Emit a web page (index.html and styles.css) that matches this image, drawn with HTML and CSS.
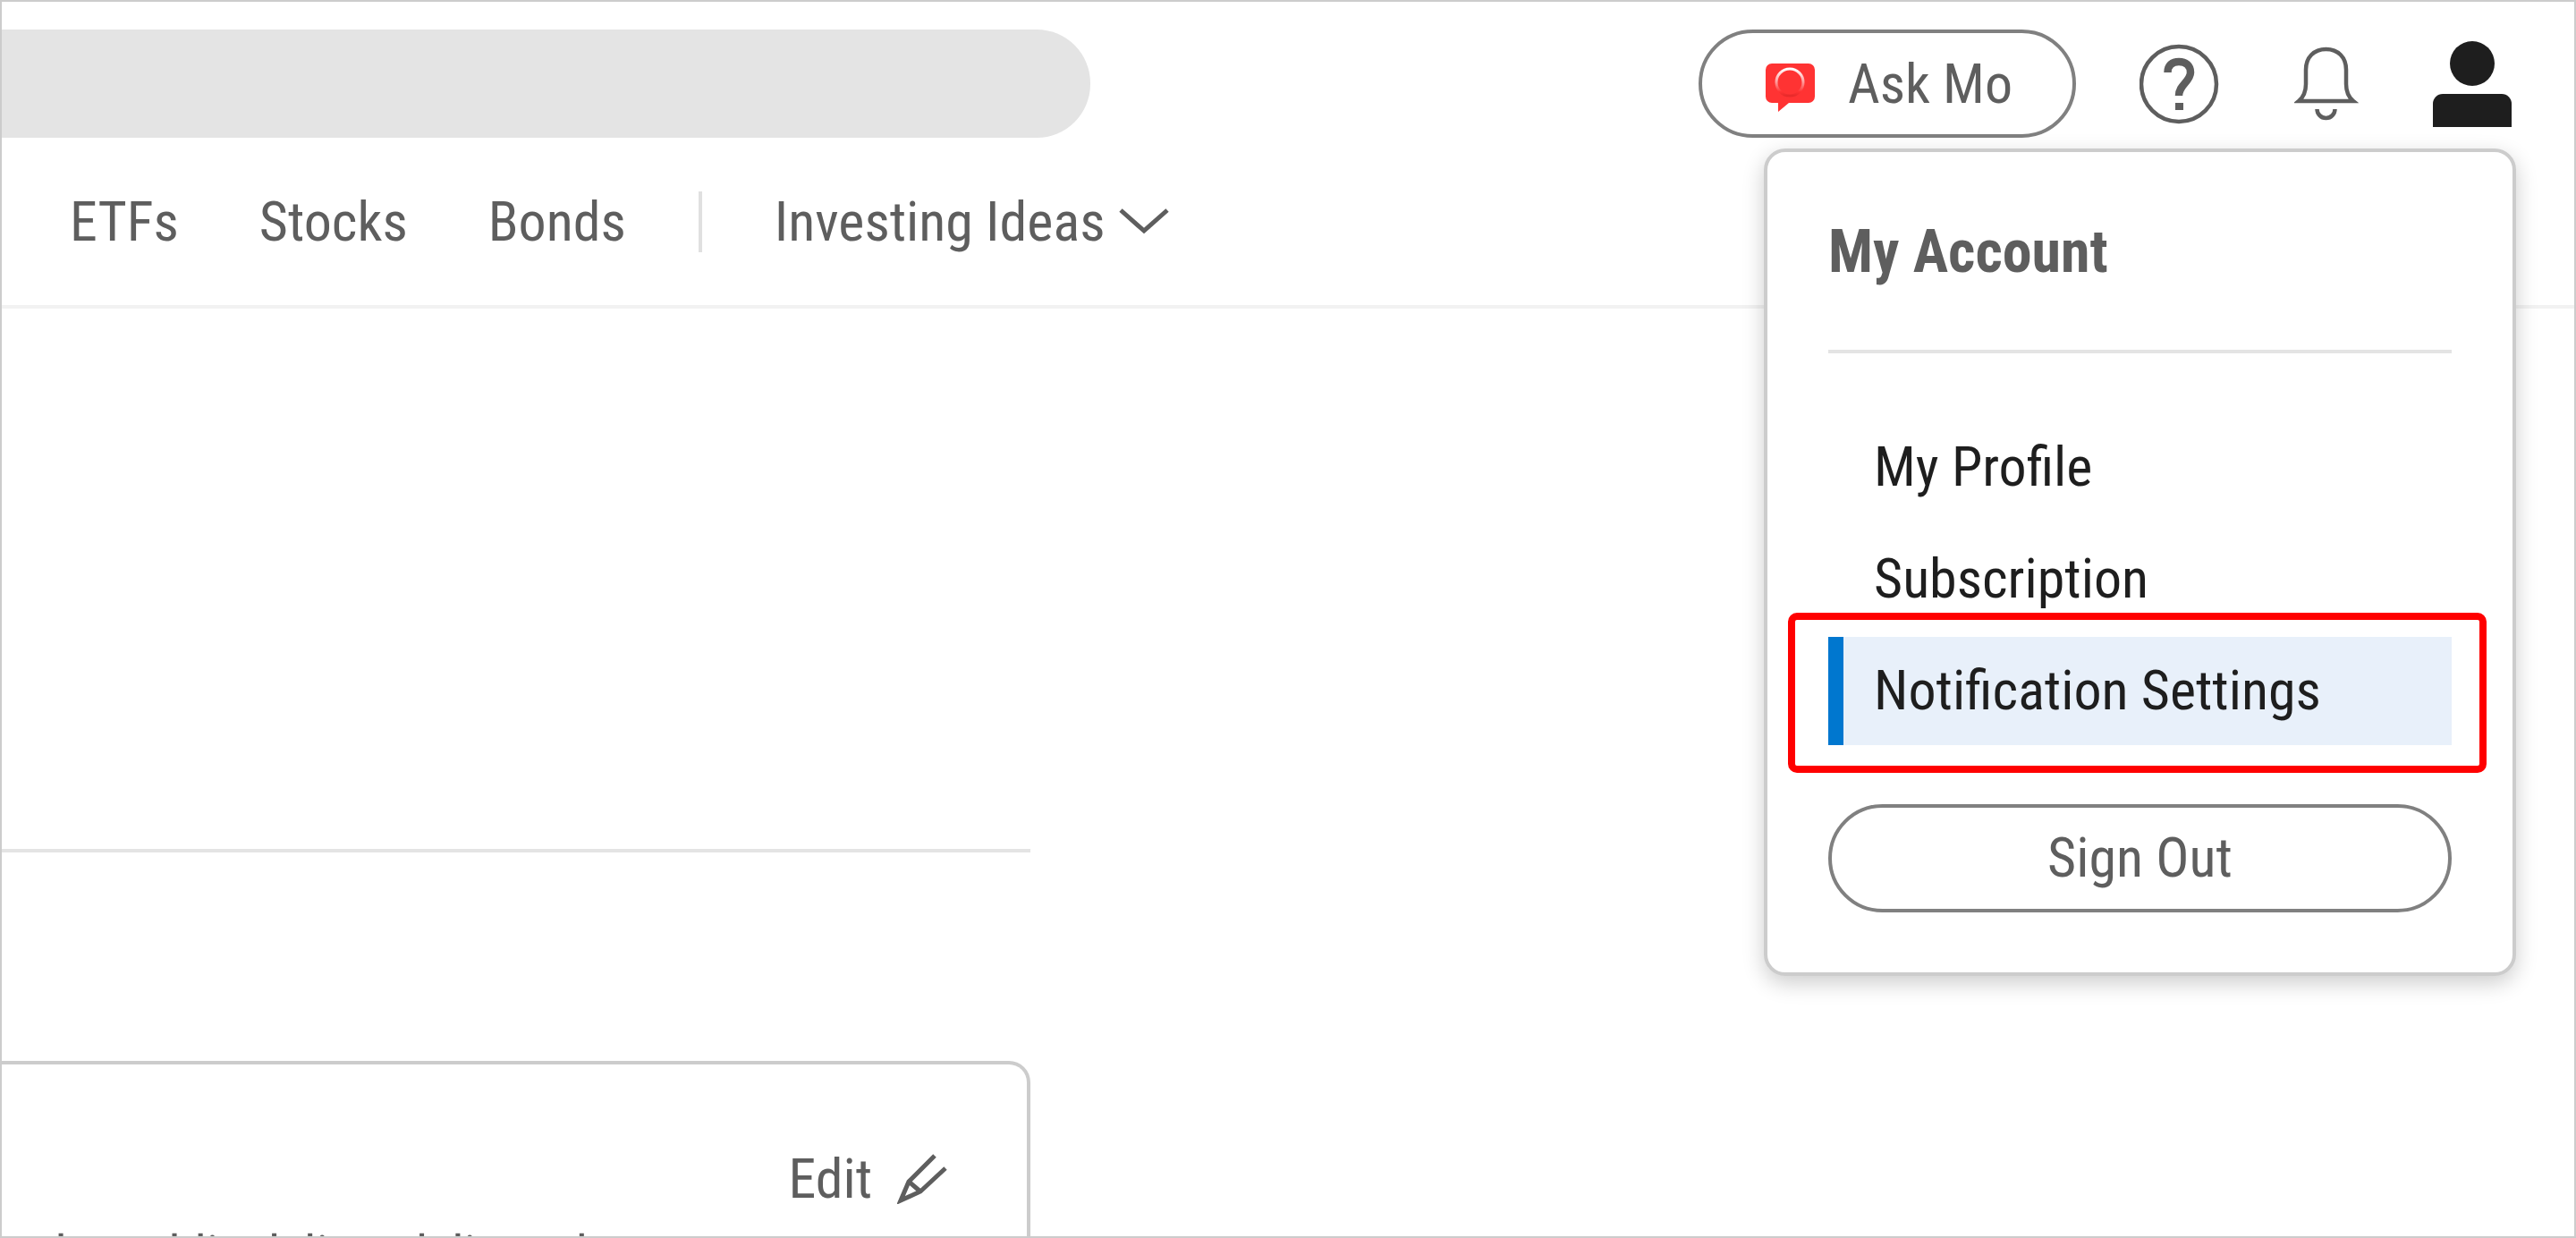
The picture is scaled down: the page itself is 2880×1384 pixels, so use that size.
FILE: index.html
```
<!DOCTYPE html>
<html lang="en">
<head>
<meta charset="utf-8">
<meta name="viewport" content="width=device-width, initial-scale=1">
<title>My Account</title>
<link rel="stylesheet" href="styles.css">
</head>
<body class="page">
<header class="header">
  <div class="topbar">
    <input class="search" type="search" aria-label="Search">
    <div class="actions">
      <button class="pill ask" type="button">
        <svg class="ask-icon" width="56" height="56" viewBox="0 0 56 56" aria-hidden="true">
          <defs>
            <linearGradient id="ring" x1="0" y1="0" x2="0" y2="1">
              <stop offset="0" stop-color="#fff"/>
              <stop offset="0.5" stop-color="#ff9a9a"/>
              <stop offset="0.85" stop-color="#ff3333"/>
              <stop offset="1" stop-color="#e82a2a"/>
            </linearGradient>
          </defs>
          <path fill="#f33" d="M7 1h41a7 7 0 0 1 7 7v30a7 7 0 0 1-7 7H26L14 55V45H7a7 7 0 0 1-7-7V8a7 7 0 0 1 7-7z"/>
          <circle cx="27" cy="22" r="15" fill="none" stroke="url(#ring)" stroke-width="3"/>
        </svg>
        <span>Ask Mo</span>
      </button>
      <button class="icon-button" type="button" aria-label="Help">
        <svg width="90" height="100" viewBox="0 0 90 100" fill="none" stroke="#5e5e5e" aria-hidden="true">
          <circle cx="44" cy="50" r="42" stroke-width="4.5"/>
          <path stroke-width="8.5" d="M31.500 37c0-8 5-12 12.500-12s13 4 13 12c0 10-13 14-13 26"/>
          <path fill="#5e5e5e" stroke="none" d="M40 71h9v8h-9z"/>
        </svg>
      </button>
      <button class="icon-button bell" type="button" aria-label="Notifications">
        <svg width="72" height="100" viewBox="0 0 72 100" fill="none" stroke="#5e5e5e" stroke-width="4.5" aria-hidden="true">
          <path d="M5 69C11 64 13 58 13 50V34C13 20 22 11 35.500 11s22.500 9 22.500 23v16c0 8 2 14 8 19z"/>
          <path d="M25.500 78c0 5 4 10 10 10s10-5 10-10"/>
        </svg>
      </button>
      <div class="account">
        <button class="icon-button" type="button" aria-label="My Account" aria-expanded="true">
          <svg width="90" height="100" viewBox="0 0 90 100" fill="#1e1e1e" aria-hidden="true">
            <circle cx="44" cy="27" r="25"/>
            <path d="M0 98V72a11 11 0 0 1 11-11h66a11 11 0 0 1 11 11v26z"/>
          </svg>
        </button>
        <section class="menu" aria-label="My Account menu">
          <h2 class="menu-title">My Account</h2>
          <nav class="menu-list" aria-label="Account">
            <a class="menu-item" href="#profile">My Profile</a>
            <a class="menu-item" href="#subscription">Subscription</a>
            <a class="menu-item menu-item-active" href="#notifications">Notification Settings</a>
          </nav>
          <button class="pill sign-out" type="button">Sign Out</button>
        </section>
      </div>
    </div>
  </div>
  <nav class="nav" aria-label="Sections">
    <a class="nav-link" href="#etfs">ETFs</a>
    <a class="nav-link" href="#stocks">Stocks</a>
    <a class="nav-link" href="#bonds">Bonds</a>
    <span class="nav-divider"></span>
    <button class="nav-link nav-more" type="button">Investing Ideas
      <svg width="56" height="32" viewBox="0 0 56 32" fill="none" stroke="#5e5e5e" stroke-width="5" aria-hidden="true"><path d="M2 3l26 23L54 3"/></svg>
    </button>
  </nav>
</header>
<main class="content">
  <hr class="rule">
  <section class="card">
    <button class="edit" type="button">Edit
      <svg width="56" height="56" viewBox="0 0 56 56" fill="none" stroke="#5e5e5e" stroke-width="5" aria-hidden="true"><path d="M42 2L13 31 4 52l22-10L54 16M13 31l13 11"/></svg>
    </button>
    <p class="card-text">ad republic deliver delivered</p>
  </section>
</main>
</body>
</html>
```
FILE: styles.css
```
* {
  box-sizing: border-box;
}

html {
  height: 100%;
  overflow: hidden;
}

.page {
  height: 100%;
  margin: 0;
  padding: 2px;
  overflow: hidden;
  background: #fff;
  color: #5e5e5e;
  font-family: "Roboto Condensed", "Liberation Sans", sans-serif;
  font-size: 62px;
  font-weight: 400;
  line-height: 80px;
}

/* Thin frame round the window, over everything else */
.page::after {
  content: "";
  position: fixed;
  inset: 0;
  border: 2px solid #ccc;
  pointer-events: none;
}

button,
input {
  margin: 0;
  padding: 0;
  border: 0;
  background: none;
  color: inherit;
  font: inherit;
}

a {
  color: inherit;
  text-decoration: none;
}

svg {
  display: block;
  flex: none;
}

.header {
  border-bottom: 4px solid #f2f2f2;
}

.topbar {
  display: flex;
  align-items: center;
  padding: 31px 68px 0 0;
}

.search {
  flex: 1 1 0;
  min-width: 0;
  max-width: 1217px;
  height: 121px;
  padding: 0 60px;
  border-radius: 0 60px 60px 0;
  background: #e4e4e4;
  appearance: none;
}

.actions {
  display: flex;
  align-items: center;
  margin-left: auto;
}

.pill {
  display: flex;
  align-items: center;
  justify-content: center;
  height: 121px;
  border: 4px solid #808080;
  border-radius: 61px;
}

.ask {
  gap: 36px;
  width: 422px;
  margin-right: 71px;
  padding-left: 4px;
}

.ask-icon {
  margin-top: 8px;
}

.icon-button {
  display: block;
}

.bell {
  margin: 0 83px;
}

.account {
  position: relative;
}

.menu {
  position: absolute;
  top: 122px;
  right: -3px;
  z-index: 1;
  width: 841px;
  padding: 72px 68px 67px;
  border: 4px solid #ccc;
  border-radius: 24px;
  background: #fff;
  box-shadow: 0 8px 24px rgba(0, 0, 0, 0.2);
}

.menu-title {
  margin: 0 0 67px;
  padding-bottom: 69px;
  border-bottom: 4px solid #e4e4e4;
  font-size: 66px;
  font-weight: 700;
}

.menu-list {
  display: grid;
  gap: 4px;
  color: #1e1e1e;
}

.menu-item {
  padding: 20px 0 21px 34px;
  border-left: 17px solid transparent;
}

.menu-item-active {
  position: relative;
  border-color: #0077cf;
  background: #e8f0fa;
}

/* Callout outline round the highlighted entry */
.menu-item-active::after {
  content: "";
  position: absolute;
  inset: -27px -39px -31px -62px;
  border: 8px solid #f00;
  border-radius: 10px;
}

.sign-out {
  width: 100%;
  margin-top: 66px;
}

.nav {
  display: flex;
  align-items: center;
  gap: 90px;
  padding: 54px 76px 53px;
}

.nav-divider {
  width: 4px;
  height: 68px;
  margin: 0 -9px;
  background: #e0e0e0;
}

.nav-more {
  display: flex;
  align-items: center;
  gap: 16px;
}

.content {
  max-width: 1150px;
  padding-top: 604px;
}

.rule {
  height: 4px;
  margin: 0 0 233px;
  border: 0;
  background: #e4e4e4;
}

.card {
  padding: 88px 89px 60px 0;
  border: 4px solid #ccc;
  border-width: 4px 4px 4px 0;
  border-radius: 0 24px 0 0;
}

.edit {
  display: flex;
  align-items: center;
  gap: 28px;
  margin-left: auto;
}

.card-text {
  margin: 0;
  padding: 4px 0 0 16px;
  font-size: 58px;
}
```
